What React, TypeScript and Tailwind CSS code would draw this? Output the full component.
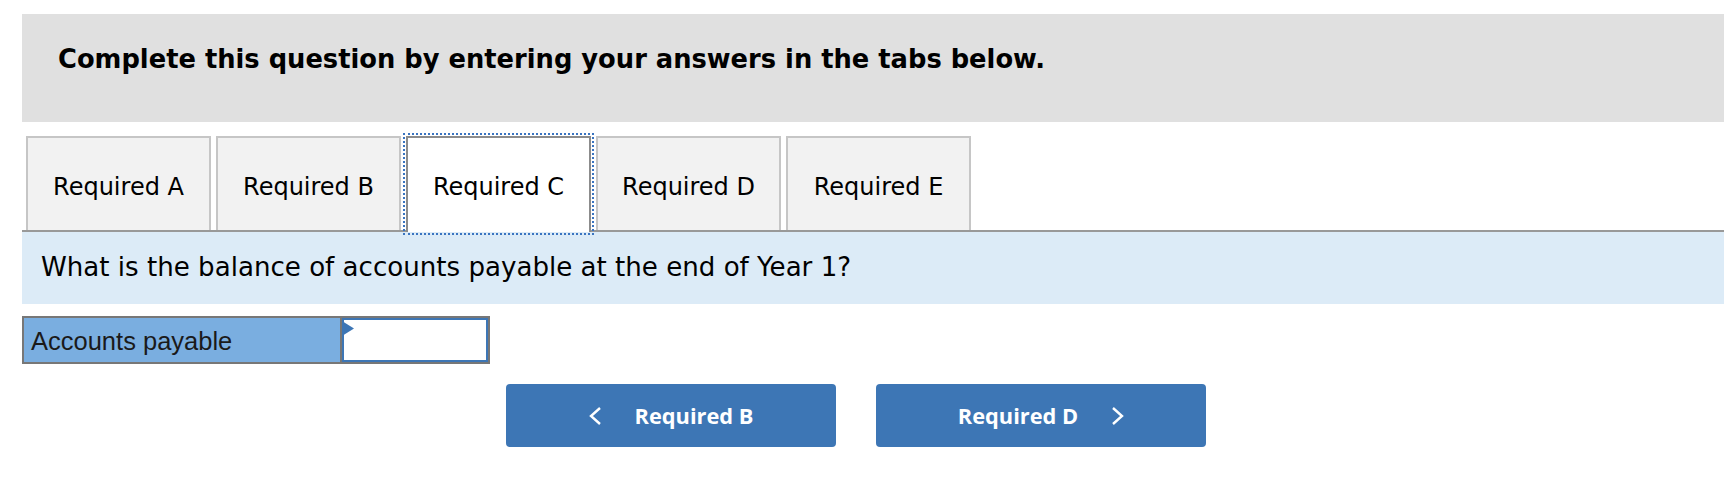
export default function App() {
  const tabs = ["Required A", "Required B", "Required C", "Required D", "Required E"];
  const active = "Required C";

  return (
    <div className="w-[1732px] h-[498px] bg-white pt-[14px] pl-[22px] font-['DejaVu_Sans',Verdana,sans-serif] text-black">
      <div className="w-[1702px]">
        {/* Instruction banner */}
        <div className="h-[108px] bg-[#e0e0e0] pl-[36px] pt-[29px]">
          <p className="text-[25.75px] leading-[32px] font-bold">
            Complete this question by entering your answers in the tabs below.
          </p>
        </div>

        {/* Tabs */}
        <div className="mt-[14px] flex items-end gap-[5px] pl-[4px] border-b-2 border-[#999999]">
          {tabs.map((t) =>
            t === active ? (
              <div
                key={t}
                className="relative z-10 -mb-[2px] w-[185px] h-[96px] bg-white border-2 border-b-0 border-[#8c8c8c] outline-2 outline-dotted outline-[#3a74c0] outline-offset-[1px] flex items-center justify-center pt-[4px] text-[24px]"
              >
                {t}
              </div>
            ) : (
              <div
                key={t}
                className="w-[185px] h-[94px] bg-[#f2f2f2] border-2 border-b-0 border-[#c6c6c6] flex items-center justify-center pt-[6px] text-[24px]"
              >
                {t}
              </div>
            )
          )}
        </div>

        {/* Question */}
        <div className="h-[72px] bg-[#dcebf7] flex items-center pl-[19px]">
          <p className="text-[26.1px]">What is the balance of accounts payable at the end of Year 1?</p>
        </div>

        {/* Answer row */}
        <div className="mt-[12px] flex">
          <div className="flex border-2 border-[#777777]">
            <div className="w-[316px] h-[44px] bg-[#7aaee0] pl-[7px] pt-[2px] flex items-center font-['Liberation_Sans',Arial,sans-serif] text-[25.5px] text-[#1a1a1a]">
              Accounts payable
            </div>
            <div className="relative w-[148px] h-[44px] border-l-2 border-[#777777]">
              <div className="h-full w-full bg-white border-2 border-[#3d76b5]" />
              <svg className="absolute left-0 top-[3px]" width="12" height="15" viewBox="0 0 12 15">
                <polygon points="0,0 12,7.5 0,15" fill="#3d76b5" />
              </svg>
            </div>
          </div>
        </div>

        {/* Navigation buttons */}
        <div className="mt-[20px] flex gap-[40px] pl-[484px]">
          <button className="w-[330px] h-[63px] rounded-[4px] bg-[#3d76b5] text-white flex items-center justify-center gap-[33px] font-['Open_Sans',sans-serif] font-bold text-[21.8px]">
            <svg width="13" height="18" viewBox="0 0 13 18" fill="none">
              <polyline points="11,1 2,9 11,17" stroke="white" strokeWidth="2.4" strokeLinejoin="miter" />
            </svg>
            <span className="pt-[2px]">Required B</span>
          </button>
          <button className="w-[330px] h-[63px] rounded-[4px] bg-[#3d76b5] text-white flex items-center justify-center gap-[33px] font-['Open_Sans',sans-serif] font-bold text-[21.8px]">
            <span className="pt-[2px]">Required D</span>
            <svg width="13" height="18" viewBox="0 0 13 18" fill="none">
              <polyline points="2,1 11,9 2,17" stroke="white" strokeWidth="2.4" strokeLinejoin="miter" />
            </svg>
          </button>
        </div>
      </div>
    </div>
  );
}
